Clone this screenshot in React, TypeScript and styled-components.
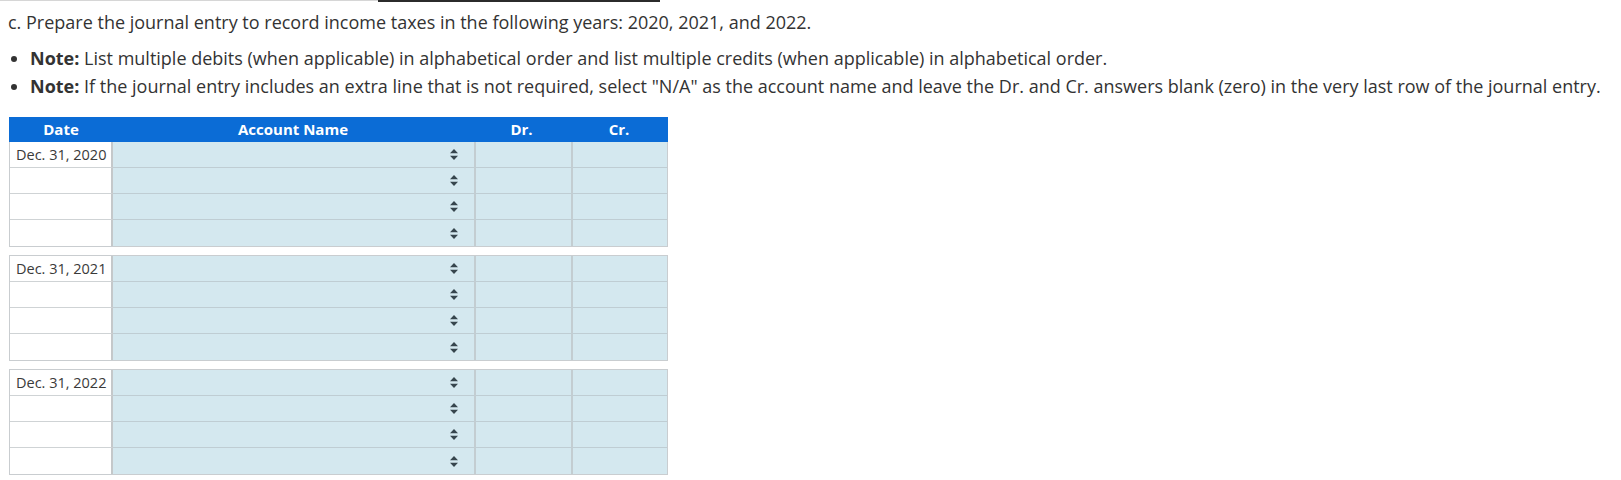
import React from "react";
import styled, { createGlobalStyle } from "styled-components";

const GlobalStyle = createGlobalStyle`
    body {
        margin: 0;
        background: #ffffff;
        font-family: "Open Sans", "DejaVu Sans", sans-serif;
        color: #333333;
    }
`;

const Page = styled.div`
    padding: 0 0 0 8px;
`;

const TopRule = styled.div`
    display: flex;
    height: 2px;
    margin-left: -8px;
`;

const RulePart = styled.div<{ $width: number; $dark?: boolean }>`
    width: ${props => props.$width}px;
    height: ${props => (props.$dark ? "2px" : "1px")};
    background: ${props => (props.$dark ? "#2b2b2b" : "#d6d6d6")};
`;

const Prompt = styled.p`
    margin: 8px 0 0 0;
    font-size: 18px;
    line-height: 24px;
`;

const NoteList = styled.ul`
    margin: 10px 0 0 0;
    padding-left: 22px;
    font-size: 18px;
    line-height: 28px;
`;

const NoteItem = styled.li`
    padding-left: 0;
`;

const Table = styled.div`
    margin: 17px 0 0 1px;
    width: 659px;
    display: flex;
    flex-direction: column;
    gap: 8px;
`;

const HeaderRow = styled.div`
    display: grid;
    grid-template-columns: 104px 360px 97px 98px;
    height: 25px;
    background: #0b6cd6;
    color: #ffffff;
    font-weight: 700;
    font-size: 15px;
    line-height: 25px;
`;

const HeaderCell = styled.div`
    text-align: center;
`;

const Block = styled.div``;

const Group = styled.div<{ $first?: boolean }>`
    border: 1px solid #c9cdd0;
    border-top: ${props => (props.$first ? "none" : "1px solid #c9cdd0")};
`;

const Row = styled.div`
    display: grid;
    grid-template-columns: 103px 361px 97px 96px;
    height: 26px;
    &:last-child > * {
        border-bottom: none;
    }
`;

const DateCell = styled.div`
    background: #ffffff;
    border-bottom: 1px solid #cfd3d5;
    border-right: 2px solid #c4c8ca;
    font-size: 14.5px;
    line-height: 25px;
    padding-left: 6px;
    color: #3a3a3a;
    white-space: nowrap;
`;

const AccountCell = styled.div`
    background: #d4e8ef;
    border-bottom: 1px solid #bfcdd3;
    display: flex;
    align-items: center;
    justify-content: flex-end;
    padding-right: 16px;
`;

const AmountCell = styled.div`
    background: #d4e8ef;
    border-bottom: 1px solid #bfcdd3;
    border-left: 2px solid #c3cdd1;
`;

const SortIcon = () => (
    <svg width="8" height="11" viewBox="0 0 8 11">
        <path d="M4 0 L8 4.2 L0 4.2 Z" fill="#36454d" />
        <path d="M0 6.8 L8 6.8 L4 11 Z" fill="#36454d" />
    </svg>
);

const groups = ["Dec. 31, 2020", "Dec. 31, 2021", "Dec. 31, 2022"];

export default function App() {
    return (
        <Page>
            <GlobalStyle />
            <TopRule>
                <RulePart $width={378} />
                <RulePart $width={282} $dark />
            </TopRule>
            <Prompt>c. Prepare the journal entry to record income taxes in the following years: 2020, 2021, and 2022.</Prompt>
            <NoteList>
                <NoteItem>
                    <strong>Note:</strong> List multiple debits (when applicable) in alphabetical order and list multiple credits (when applicable) in alphabetical order.
                </NoteItem>
                <NoteItem>
                    <strong>Note:</strong> If the journal entry includes an extra line that is not required, select "N/A" as the account name and leave the Dr. and Cr. answers blank (zero) in the very last row of the journal entry.
                </NoteItem>
            </NoteList>
            <Table>
                {groups.map((date, groupIndex) => (
                    <Block key={date}>
                        {groupIndex === 0 && (
                            <HeaderRow>
                                <HeaderCell>Date</HeaderCell>
                                <HeaderCell>Account Name</HeaderCell>
                                <HeaderCell>Dr.</HeaderCell>
                                <HeaderCell>Cr.</HeaderCell>
                            </HeaderRow>
                        )}
                        <Group $first={groupIndex === 0}>
                            {[0, 1, 2, 3].map(rowIndex => (
                                <Row key={rowIndex}>
                                    <DateCell>{rowIndex === 0 ? date : ""}</DateCell>
                                    <AccountCell>
                                        <SortIcon />
                                    </AccountCell>
                                    <AmountCell />
                                    <AmountCell />
                                </Row>
                            ))}
                        </Group>
                    </Block>
                ))}
            </Table>
        </Page>
    );
}
